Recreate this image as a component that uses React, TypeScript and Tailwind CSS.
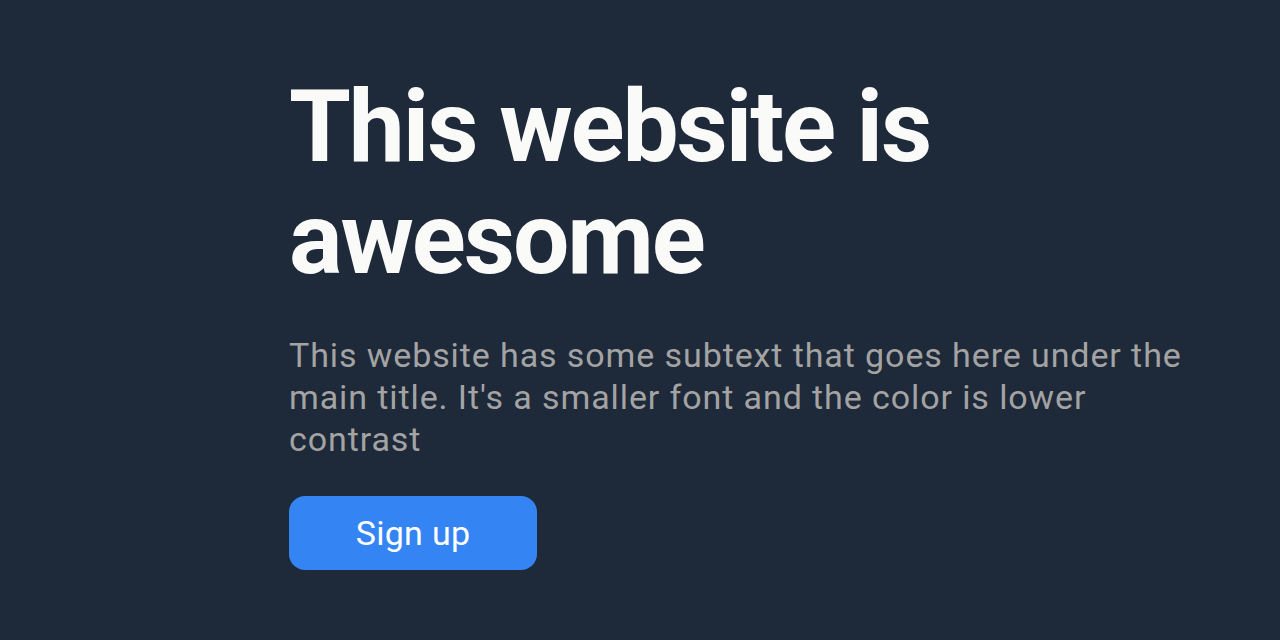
export default function App() {
  return (
    <div className="min-h-[640px] w-full bg-[#1e2939] pl-[289px] pt-[71px]" style={{ fontFamily: 'Roboto, "Noto Sans", sans-serif' }}>
      <div className="w-[915px]">
        <h1 className="text-[100px] font-bold leading-[112px] tracking-[-2.1px] text-[#fafaf9]">This website is awesome</h1>
        <p className="mt-[39px] text-[34px] leading-[42px] tracking-[0.9px] text-[#a3a3a3]">
          This website has some subtext that goes here under the main title. It's a smaller font and the color is lower contrast
        </p>
        <button className="mt-[36px] flex h-[74px] w-[248px] items-center justify-center rounded-[16px] bg-[#3584f3] text-[34px] font-normal tracking-[0.3px] text-white">
          Sign up
        </button>
      </div>
    </div>
  );
}
